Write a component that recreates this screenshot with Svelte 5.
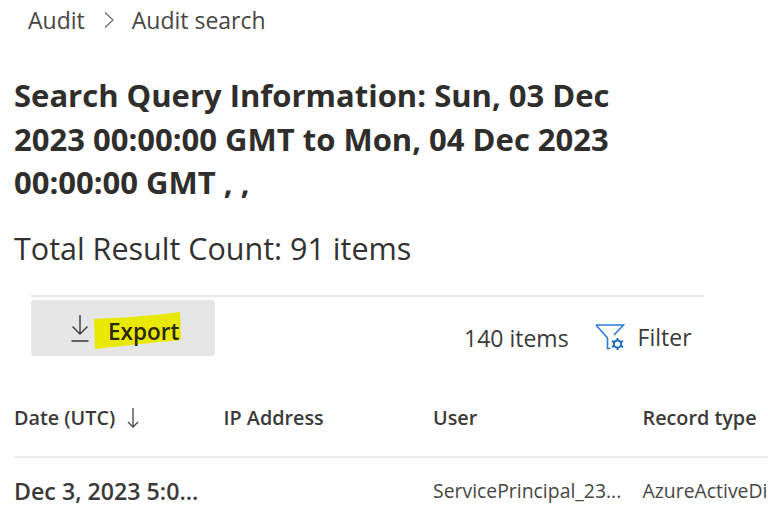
<script>
    let columns = ['IP Address', 'User', 'Record type'];
</script>

<div class="page">
    <nav class="crumbs">
        <span>Audit</span>
        <svg class="chevron" width="14" height="18" viewBox="0 0 14 18"><path d="M3 1.5 L11 9 L3 16.5" /></svg>
        <span>Audit search</span>
    </nav>

    <h1>Search Query Information: Sun, 03 Dec 2023 00:00:00 GMT to Mon, 04 Dec 2023 00:00:00 GMT , ,</h1>
    <div class="total">Total Result Count: 91 items</div>

    <div class="toolbar">
        <button class="export">
            <svg class="down" width="20" height="30" viewBox="0 0 20 30">
                <path d="M10 2 V21 M2.5 13.5 L10 21 L17.5 13.5 M1.5 28 H18.5" />
            </svg>
            <span class="marked">
                <svg class="marker" width="87" height="37" viewBox="0 0 87 37">
                    <path d="M0 7 C25 6 55 4 86 0 L87 28 C55 31 25 34 1 37 Z" />
                </svg>
                <span class="label">Export</span>
            </span>
        </button>
        <div class="count">140 items</div>
        <div class="filter">
            <svg width="30" height="28" viewBox="0 0 30 28">
                <path class="funnel" d="M1 2 H28.5 L19 12 M1 2 L12.5 15 V25.5 H15.5" />
                <g class="gear">
                    <circle cx="22.5" cy="21" r="3.6" />
                    <path d="M22.5 15 V17.4 M22.5 24.6 V27 M17 18 L19.3 19.2 M25.7 22.8 L28 24 M17 24 L19.3 22.8 M25.7 19.2 L28 18" />
                </g>
            </svg>
            <span>Filter</span>
        </div>
    </div>

    <div class="head">
        <div class="cell date">
            Date (UTC)
            <svg width="12" height="22" viewBox="0 0 12 22"><path d="M6 1 V20 M1 15 L6 20 L11 15" /></svg>
        </div>
        {#each columns as col}
            <div class="cell">{col}</div>
        {/each}
    </div>

    <div class="row">
        <div class="cell when">Dec 3, 2023 5:0...</div>
        <div class="cell"></div>
        <div class="cell plain">ServicePrincipal_23...</div>
        <div class="cell plain">AzureActiveDirectory</div>
    </div>
</div>

<style>
    :global(body) {
        margin: 0;
        background: #fff;
        overflow: hidden;
    }

    .page {
        width: 768px;
        height: 523px;
        overflow: hidden;
        font-family: "Open Sans", "Noto Sans", sans-serif;
        color: #323130;
    }

    .crumbs {
        display: flex;
        align-items: center;
        height: 40px;
        padding-left: 28px;
        font-size: 23px;
        color: #484644;
    }

    .chevron {
        margin: 0 16px 0 17px;
        fill: none;
        stroke: #6b6a69;
        stroke-width: 1.2;
    }

    h1 {
        width: 635px;
        margin: 34px 0 0 14px;
        font-size: 31px;
        line-height: 43.5px;
        font-weight: 700;
        color: #2f2e2d;
    }

    .total {
        margin: 23px 0 0 14px;
        font-size: 30.5px;
        line-height: 40px;
    }

    .toolbar {
        display: flex;
        align-items: center;
        width: 673px;
        margin: 27px 0 0 31px;
        padding-top: 3px;
        border-top: 2px solid #e8e8e8;
    }

    .export {
        display: flex;
        align-items: center;
        width: 184px;
        height: 56px;
        padding: 0 0 0 39px;
        border: none;
        border-radius: 3px;
        background: #e6e6e6;
        font-family: inherit;
        color: #2b2a10;
    }

    .down {
        fill: none;
        stroke: #3b3a39;
        stroke-width: 1.4;
    }

    .marked {
        position: relative;
        display: block;
        width: 87px;
        height: 37px;
        margin: 6px 0 0 4px;
    }

    .marker {
        position: absolute;
        left: 0;
        top: 0;
        fill: #e9e800;
    }

    .label {
        position: absolute;
        left: 14px;
        top: 4px;
        font-size: 22.5px;
        font-weight: 600;
        line-height: 32px;
    }

    .count {
        margin: 21px 0 0 249px;
        font-size: 23px;
        color: #3b3a39;
    }

    .filter {
        display: flex;
        align-items: center;
        gap: 13px;
        margin: 19px 0 0 26px;
        font-size: 23px;
        color: #3b3a39;
    }

    .funnel {
        fill: none;
        stroke: #2b7cd3;
        stroke-width: 1.6;
    }

    .gear circle {
        fill: none;
        stroke: #1f6fc4;
        stroke-width: 2;
    }

    .gear path {
        stroke: #1f6fc4;
        stroke-width: 2;
    }

    .head, .row {
        display: grid;
        grid-template-columns: repeat(4, 209.5px);
        align-items: center;
        margin-left: 14px;
    }

    .head {
        height: 76px;
        margin-top: 24px;
        font-size: 19.8px;
        font-weight: 600;
        border-bottom: 2px solid #ececec;
        color: #3b3a39;
    }

    .date {
        display: flex;
        align-items: center;
        gap: 12px;
    }

    .date svg {
        fill: none;
        stroke: #484644;
        stroke-width: 1.3;
    }

    .row {
        height: 66px;
        white-space: nowrap;
    }

    .when {
        font-size: 23.2px;
        font-weight: 600;
        color: #3b3a39;
    }

    .plain {
        font-size: 19.4px;
        color: #484644;
    }
</style>
